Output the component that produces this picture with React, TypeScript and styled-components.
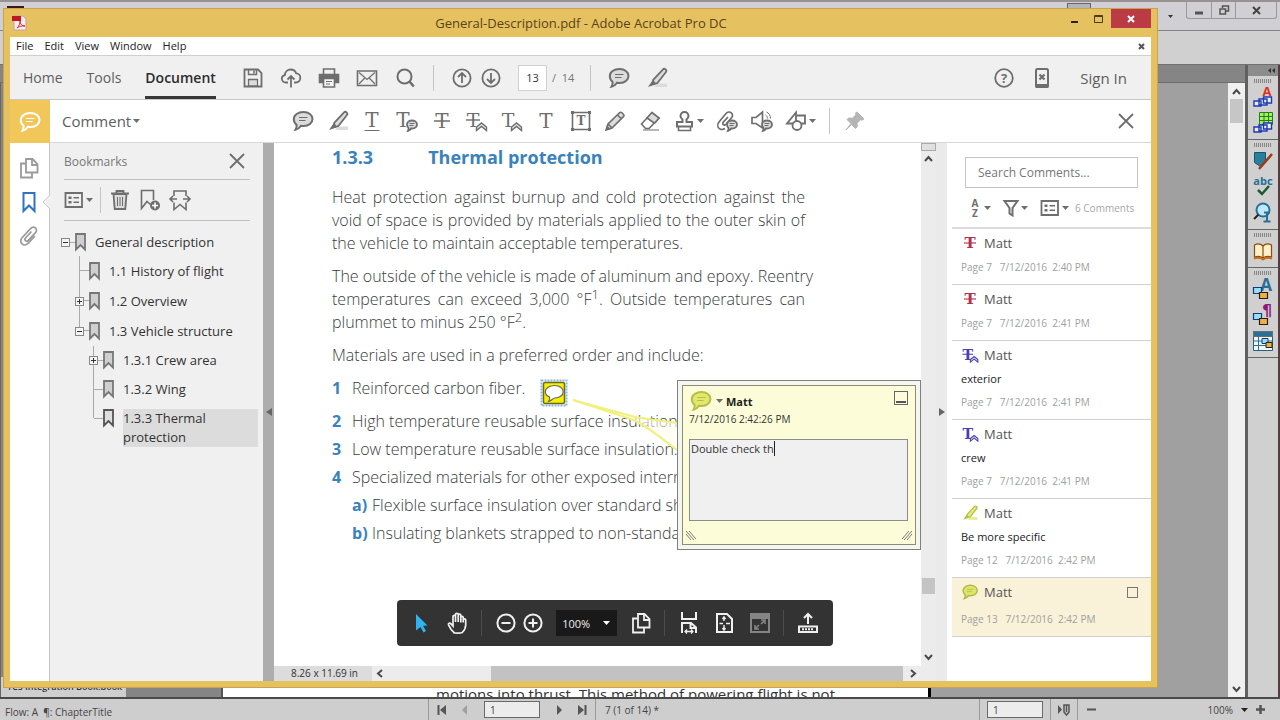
import React from "react";
import styled, { createGlobalStyle, css } from "styled-components";

const ink = "#6e6e6e";
const tint = "#dcdcdc";
const gold = "#e6c15f";

const Global = createGlobalStyle`
  *, *::before, *::after { box-sizing: border-box; }
  body { margin: 0; font-family: "Open Sans", "Noto Sans", sans-serif; font-size: 12px; color: #333; }
  button, input, select, textarea { font: inherit; color: inherit; margin: 0; }
  button { border: 0; padding: 0; background: none; cursor: pointer; }
  ul, ol { list-style: none; margin: 0; padding: 0; }
  h1, h2, h3, p { margin: 0; font-weight: inherit; font-size: inherit; }
`;

/* ---------- icons ---------- */

const Svg = styled.svg<{ $w?: number; $h?: number }>`
  display: block;
  flex: none;
  width: ${(p) => p.$w ?? 24}px;
  height: ${(p) => p.$h ?? 24}px;
  overflow: visible;
`;

type IconProps = { color?: string; fill?: string; bold?: boolean };
type DrawProps = { color?: string; children: React.ReactNode; w?: number; h?: number; sw?: number };

const Draw = ({ children, w = 24, h = 24, color = ink, sw = 2 }: DrawProps) => (
  <Svg $w={w} $h={h} viewBox={`0 0 ${w} ${h}`} fill="none" stroke={color} strokeWidth={sw} aria-hidden="true">
    {children}
  </Svg>
);

const Letter = ({ x = 12, y = 19, size = 20, color = ink, ch = "T", family = "DejaVu Serif", weight = 400 }) => (
  <text x={x} y={y} fontSize={size} fontFamily={family} fontWeight={weight} textAnchor="middle" fill={color} stroke="none">
    {ch}
  </text>
);

const Caret = ({ color = ink }: IconProps) => (
  <Svg $w={7} $h={4} viewBox="0 0 7 4" aria-hidden="true">
    <path d="M0 0h7L3.500 4z" fill={color} />
  </Svg>
);

const bubblePath = "M12.500 3c5.200 0 9 3 9 7s-3.800 7-8.800 7c-1 0-1.800-.1-2.700-.3-1.500 2.300-3.300 3.600-5.500 4 1-1.500 1.400-3.100 1.100-5C3.800 14.400 2.800 12.300 2.800 10c0-4 4.200-7 9.700-7z";

const Bubble = ({ color, fill = tint }: IconProps) => (
  <Draw color={color}>
    <path d={bubblePath} fill={fill} />
    <path d="M8 8.500h8.500M8 11.500h6.500" strokeWidth={1} />
  </Draw>
);
const MiniBubble = ({ x = 16, y = 16 }) => (
  <g transform={`translate(${x} ${y})`}>
    <path d="M0-4.500c3 0 5 1.800 5 4s-2 4-5 4l-1 0c-.7 1.400-1.700 2-3 2.300.5-.9.700-1.800.5-2.900C-4.500 2-5 .9-5-.5c0-2.200 2-4 5-4z" fill={tint} strokeWidth={1.8} />
    <path d="M-2.500-1.500h5M-2.500.5h4" strokeWidth={1} />
  </g>
);
const Marker = ({ color, fill = tint }: IconProps) => (
  <Draw color={color} sw={1.8}>
    <path d="M9 21h13v-3.500H12z" fill={fill} stroke="none" />
    <path d="M8.200 13.800L17.800 3.600c.8-.9 2-.9 2.800-.2.800.7.900 1.900.2 2.800l-8.600 11-4.300.8z" fill={fill} />
    <path d="M7.600 14.200L3 21l7.600-2.600-1-2.800z" fill={color ?? ink} stroke="none" />
  </Draw>
);
const Save = () => (
  <Draw sw={1.8}>
    <path d="M3.500 3.500h13.500l3.500 3.500v13.500h-17z" />
    <path d="M7.500 3.500v5h8v-5M13 4.500v3" strokeWidth={1.5} />
    <path d="M7.500 20v-6.500h9V20z" fill={tint} strokeWidth={1.3} />
  </Draw>
);
const Cloud = () => (
  <Draw sw={1.8}>
    <path d="M9 16.500H6.800c-2.200 0-4-1.600-4-3.700 0-1.900 1.300-3.400 3.100-3.700C6 6 8.400 3.500 11.600 3.500c2.600 0 4.700 1.500 5.600 3.900 2.400 0 4.100 2 4.100 4.400 0 2.600-1.800 4.700-4.400 4.700H15" />
    <path d="M12 21.500V10M8.500 13.500L12 10l3.500 3.500" />
  </Draw>
);
const Printer = () => (
  <Draw sw={1.6}>
    <path d="M6.500 8V3h11v5" />
    <path d="M2.500 8.500h19v8h-19z" fill={ink} />
    <path d="M6.500 12.500h11v8.500h-11z" fill="#f4f4f4" />
    <path d="M9 15.500h6M9 18h4" strokeWidth={1} />
  </Draw>
);
const Mail = () => (
  <Draw sw={1.6}>
    <path d="M2.500 5h19v14.500h-19z" />
    <path d="M4 6.500l8 7 8-7M4 18l5.800-6M20 18l-5.800-6" strokeWidth={1.2} />
  </Draw>
);
const Search = () => (
  <Draw>
    <circle cx="11.500" cy="10.500" r="7" />
    <path d="M16.500 15.500l4.300 5" strokeWidth={2.6} />
  </Draw>
);
const RoundArrow = ({ down = false }) => (
  <Draw sw={1.8}>
    <circle cx="12" cy="12" r="8.600" />
    <path d={down ? "M12 7v9.500M8 13l4 4 4-4" : "M12 17V7.500M8 11l4-4 4 4"} />
  </Draw>
);
const Help = () => (
  <Draw sw={1.8}>
    <circle cx="12" cy="12" r="8.800" />
    <Letter ch="?" size={13} y={17} family="Open Sans" weight={700} />
  </Draw>
);
const Phone = () => (
  <Draw sw={2}>
    <rect x="6" y="3" width="12" height="18" rx="1.500" />
    <path d="M6 18.500h12v3H6z" fill={ink} strokeWidth={1} />
    <path d="M9.500 8.500l5 5M14.500 8.500l-5 5" strokeWidth={2.2} />
  </Draw>
);
const chevrons = "M12.500 18l5-4 5 4v3.500l-5-4-5 4z";
const Underline = () => <Draw sw={1}><Letter y={18} /><path d="M4.500 21.500h15" /></Draw>;
const TextBubble = () => <Draw><Letter x={8} y={18} /><MiniBubble x={17} y={16} /></Draw>;
const Strike = ({ color = ink, bold }: IconProps) => (
  <Draw color={color} sw={1.5}><Letter color={color} weight={bold ? 700 : 400} /><path d="M4 12h16" /></Draw>
);
const Replace = ({ color = ink, bold }: IconProps) => (
  <Draw color={color} sw={1.4}>
    <Letter x={9} y={18} color={color} size={19} weight={bold ? 700 : 400} />
    <path d="M2 11h14" />
    <path d={chevrons} fill={tint} />
  </Draw>
);
const Insert = ({ color = ink, bold }: IconProps) => (
  <Draw color={color} sw={1.4}>
    <Letter x={9} y={18} color={color} size={19} weight={bold ? 700 : 400} />
    <path d={chevrons} fill={tint} />
  </Draw>
);
const PlainT = () => <Draw><Letter /></Draw>;
const BoxT = () => (
  <Draw sw={1.6}>
    <path d="M3.500 3.500h17v17h-17z" />
    <path d="M2 2h3v3H2zM19 2h3v3h-3zM2 19h3v3H2zM19 19h3v3h-3z" fill={ink} stroke="none" />
    <Letter y={16} size={12} weight={700} />
  </Draw>
);
const Pencil = () => (
  <Draw sw={1.6}>
    <path d="M3.500 20.500l1.500-5.500L16.500 3.700c.7-.7 1.700-.7 2.400 0l1.500 1.500c.7.700.7 1.700 0 2.400L9 19z" fill={tint} />
    <path d="M14.500 6l3.800 3.800M5 15l4 4" />
    <path d="M3.200 20.800l1-3 2 2z" fill={ink} />
  </Draw>
);
const Eraser = () => (
  <Draw sw={1.6}>
    <path d="M3.500 15L14 3.500l7 5.500L11 19.500H7.500z" fill="#fff" />
    <path d="M9 9l7.500 5.200L21 9l-7-5.500z" fill={tint} />
    <path d="M5 21h16" strokeWidth={1} />
  </Draw>
);
const Stamp = () => (
  <Draw w={20}>
    <path d="M7.500 13v-2.500C6 9.300 5.500 8.200 5.500 7A3.900 3.900 0 0 1 9.500 3a3.900 3.900 0 0 1 4 4c0 1.200-.6 2.300-2 3.500V13h5.500v4.500H2V13z" />
    <path d="M3.500 18v3.500h12V18" strokeWidth={1.6} />
  </Draw>
);
const ClipBubble = () => (
  <Draw sw={1.7}>
    <path d="M10 19.500c-2.500 1.800-6 1-7-1.500-.7-1.700-.2-3.500 1-5l7-8.500c1.500-1.700 3.800-2 5.300-.7 1.500 1.300 1.600 3.400.2 5l-5.500 6.500c-.8.9-2 1-2.700.3-.7-.6-.8-1.600 0-2.500L13 8" />
    <MiniBubble x={17} y={16} />
  </Draw>
);
const SoundBubble = () => (
  <Draw sw={1.7}>
    <path d="M2 8.500h4L12.500 3v16L6 14.500H2z" />
    <path d="M15.500 6c1.200.8 2 2 2 3.500M16.500 3c2.300 1 4 3.300 4 6.500" strokeWidth={1} />
    <MiniBubble x={17} y={16} />
  </Draw>
);
const Shapes = () => (
  <Draw w={22} sw={1.8}>
    <path d="M2 14.500L11 3.500v11z" />
    <path d="M12 6.500h8v8h-4" />
    <circle cx="12" cy="16.500" r="4.500" fill="#fff" />
  </Draw>
);
const Pin = () => (
  <Draw color="#b5b5b5" sw={1}>
    <path d="M14 3l7 7-2 1.200-1.500-.5-3.500 3.500.3 3.500-1.800 1.800-4-4L3 21l5-6.500-4-4L5.800 9l3.600.3 3.400-3.500L12.500 4z" fill="#b5b5b5" />
  </Draw>
);
const Cross = ({ color = ink, size = 16 }: { color?: string; size?: number }) => (
  <Draw w={size} h={size} color={color} sw={size > 12 ? 1.8 : 2}>
    <path d={`M1 1L${size - 1} ${size - 1}M${size - 1} 1L1 ${size - 1}`} />
  </Draw>
);
const Pages = ({ color = "#9a9a9a" }: IconProps) => (
  <Draw color={color} sw={1.8}>
    <path d="M9 3h6.500l5 5v8.500H9z" />
    <path d="M15 3.500V9h5.500" />
    <path d="M8.500 7.500H4v14h11V17" />
  </Draw>
);
const BookmarkMark = () => <Draw color="#2f74c0"><path d="M6.500 3h11v18L12 15.500 6.500 21z" /></Draw>;
const Clip = () => (
  <Draw color="#9a9a9a" sw={1.7}>
    <path d="M14.500 7.500L8.500 14c-.8.900-.7 2 0 2.700.8.700 2 .6 2.800-.3l7.200-7.700c1.400-1.500 1.300-3.500 0-4.700-1.400-1.200-3.300-1.100-4.700.4L5.300 13.500c-2 2.100-2 4.700-.3 6.300 1.700 1.600 4.400 1.400 6.300-.6l6.500-7" />
  </Draw>
);
const ListBox = () => (
  <Draw w={20} sw={1.8}>
    <path d="M1.500 5h16.500v14H1.500z" />
    <path d="M4.500 8.500h3v2.500h-3zM4.500 13h3v2.500h-3z" fill={ink} stroke="none" />
    <path d="M9.500 9.800h5.500M9.500 14.300h5.500" strokeWidth={1.5} />
  </Draw>
);
const Trash = () => (
  <Draw sw={1.8}>
    <path d="M3 5.500h18M8.500 5V3h7v2" />
    <path d="M5.500 6l1.200 15h10.600l1.200-15z" fill={tint} />
    <path d="M9.500 9v9M12 9v9M14.500 9v9" strokeWidth={1} />
  </Draw>
);
const BookmarkAdd = () => (
  <Draw sw={1.6}>
    <path d="M12.500 16.500L9 13.500l-5.500 7V2.500h12V12" />
    <circle cx="17" cy="17.500" r="5" fill={ink} stroke="none" />
    <path d="M17 14.500v6M14 17.500h6" stroke="#fff" />
  </Draw>
);
const BookmarkExpand = () => (
  <Draw sw={1.6}>
    <path d="M6 8V3h12v5M6 14.500v7l6-5 6 5v-7" />
    <path d="M9 11H2M5 8l-3 3 3 3M15 11h7M19 8l3 3-3 3" />
  </Draw>
);
const TreeMark = ({ dark = false }) => (
  <Svg $w={11} $h={18} viewBox="0 0 11 18" aria-hidden="true">
    <path d="M1 1h9v15.500L5.500 12 1 16.500z" fill={dark ? "#dedede" : "#cfcfcf"} stroke={dark ? "#555" : "#777"} strokeWidth="1.800" />
  </Svg>
);
const SortAZ = () => (
  <Draw w={14}>
    <Letter x={7} y={11} ch="A" size={10} family="Open Sans" weight={700} />
    <Letter x={7} y={21} ch="Z" size={10} family="Open Sans" weight={700} />
  </Draw>
);
const Funnel = () => <Draw w={16}><path d="M1.500 5h13l-5 7v7.500l-3-2V12z" /></Draw>;

/* ---------- backdrop application ---------- */

const Desktop = styled.div`
  position: relative;
  height: 100vh;
  display: flex;
  flex-direction: column;
  overflow: hidden;
  background: #d0d0d0;
`;
const BackTop = styled.div`
  height: 31px;
  flex: none;
  display: flex;
  justify-content: flex-end;
  align-items: flex-start;
  background: #cfcfd4;
  border-top: 2px solid #9a9292;
  border-bottom: 1px solid #858585;
`;
const BackTools = styled.div`
  height: 34px;
  flex: none;
  border-bottom: 1px solid #707070;
`;
const LogoSliver = styled.span`
  width: 17px;
  height: 12px;
  margin: 4px auto 0 7px;
  background: #3a1a18;
`;
const TopCombo = styled.span`
  width: 24px;
  height: 12px;
  margin: 1px 77px 0 0;
  border: 1px solid #666;
  background: #b4b4bc;
`;
const TopCaret = styled.span`
  margin: 13px 13px 0 0;
`;
const BackControls = styled.div`
  display: flex;
  height: 17px;
  margin-right: 3px;
  border: 1px solid #999;
  border-top: 0;
  border-radius: 0 0 3px 3px;
`;
const BackControl = styled.button<{ $wide?: boolean }>`
  display: grid;
  place-items: center;
  width: ${(p) => (p.$wide ? 41 : 24)}px;
  & + & { border-left: 1px solid #999; }
`;
const BackMain = styled.div`
  flex: 1;
  min-height: 0;
  display: flex;
`;
const BackDocColumn = styled.div`
  flex: 1;
  display: flex;
  flex-direction: column;
`;
const BackTabs = styled.div`
  height: 18px;
  background: #858585;
  border-bottom: 1px solid #6c6c6c;
`;
const BackCanvas = styled.div`
  flex: 1;
  min-height: 0;
  display: flex;
  background: #a0a0a0;
`;
const BookPane = styled.div`
  width: 223px;
  display: flex;
  align-items: flex-end;
  background: #858585;
  border-right: 2px solid #555;
  border-left: 1px solid #666;
`;
const BookTab = styled.span`
  width: 125px;
  padding-left: 6px;
  line-height: 20px;
  white-space: nowrap;
  font-size: 9px;
  font-weight: 600;
  color: #333;
  background: #cfcfcf;
`;
const BackPage = styled.div`
  flex: 0 1 708px;
  display: flex;
  align-items: flex-end;
  overflow: hidden;
  padding-left: 213px;
  background: #fff;
  border-right: 3px solid #000;
`;
const BackPageLine = styled.p`
  flex: none;
  height: 13px;
  line-height: 20px;
  font-size: 15px;
  color: #333;
`;
const BackScroll = styled.div`
  width: 17px;
  margin-left: auto;
  display: flex;
  flex-direction: column;
  align-items: center;
  justify-content: space-between;
  padding: 5px 0 4px;
  background: #f0f0f0;
`;
const BackThumb = styled.span`
  width: 13px;
  height: 24px;
  margin: 2px 0 auto;
  background: #c6c6c6;
`;
const Palette = styled.div`
  width: 35px;
  display: flex;
  flex-direction: column;
  border-left: 3px solid #606060;
  border-right: 2px solid #5a3a40;
`;
const PaletteHead = styled.div`
  height: 11px;
  display: flex;
  justify-content: flex-end;
  align-items: center;
  padding-right: 3px;
  background: #8c8c8c;
`;
const PaletteGroup = styled.div`
  display: flex;
  flex-direction: column;
  align-items: center;
  gap: 2px;
  padding: 3px 0 4px;
  border-bottom: 1px solid #666;
`;
const Grip = styled.span`
  width: 18px;
  height: 4px;
  background: repeating-linear-gradient(90deg, #888 0 1px, #ccc 1px 2px);
`;
const BackStatus = styled.footer`
  height: 23px;
  flex: none;
  display: flex;
  align-items: center;
  background: #cecece;
  border-top: 2px solid #4a4a4a;
  font-size: 10px;
  color: #444;
`;
const StatusText = styled.span`
  padding: 5px 0 0 5px;
  flex: 0 0 428px;
`;
const StatusGroup = styled.div<{ $w: number }>`
  height: 21px;
  width: ${(p) => p.$w}px;
  display: flex;
  align-items: center;
  justify-content: space-around;
  border-left: 1px solid #9a9a9a;
`;
const StatusInput = styled.input`
  width: 56px;
  height: 17px;
  padding: 0 5px;
  border: 1px solid #6a6a6a;
  border-radius: 0;
  background: #ececec;
`;
const StatusCount = styled.span`
  flex: 1;
  height: 21px;
  padding: 4px 0 0 9px;
  border-left: 1px solid #9a9a9a;
`;
const StatusZoom = styled.div`
  flex: 0 0 203px;
  height: 21px;
  display: flex;
  align-items: center;
  gap: 8px;
  padding: 0 15px 0 9px;
  border-left: 1px solid #9a9a9a;
`;
const ZoomLevel = styled.span`
  margin-left: auto;
`;

const Chevron = ({ dir }: { dir: "up" | "down" | "left" | "right" }) => {
  const d = { up: "M1 6l3.500-4L8 6", down: "M1 3l3.500 4L8 3", left: "M6 1L2 4.500 6 8", right: "M3 1l4 3.500L3 8" }[dir];
  return <Draw w={9} h={9} color="#4a4a4a"><path d={d} /></Draw>;
};

/* small blue and amber squares shared by the catalog icons */
const Tiles = () => (
  <g strokeWidth="1.200">
    <path d="M2.500 10.500h8v6h-8z" fill="#9adcf0" stroke="#123a80" />
    <path d="M8.500 15.500h8v6h-8z" fill="#f0b040" stroke="#222" />
  </g>
);
const Stack = () => (
  <g fill="#e8f0ff" stroke="#2038b0" strokeWidth="1.400">
    <path d="M12.500 12h8v6h-8zM8 14h8v6H8zM3 16h7v5H3z" />
  </g>
);
const paletteGroups: React.ReactNode[][] = [
  [
    <Draw key="char"><Letter x={16} y={11} ch="A" size={13} color="#e03020" family="Open Sans" weight={700} /><Stack /></Draw>,
    <Draw key="grid" sw={1}><path d="M8.500 1.500h13v12h-13z" fill="#a8f060" stroke="#208020" /><path d="M13 1.500v12M17.500 1.500v12M8.500 5.500h13M8.500 9.500h13" stroke="#208020" /><Stack /></Draw>,
  ],
  [
    <Draw key="tag" sw={1}><path d="M3.500 3.500h11v8l-5 6-6-4z" fill="#2a7f9c" stroke="#1b5468" /><path d="M21 5L8 20" stroke="#a03818" strokeWidth={2.5} /></Draw>,
    <Draw key="spell"><Letter y={10} ch="abc" size={11} color="#2a6f96" family="Open Sans" weight={700} /><path d="M7 15l4 4 7-8" stroke="#1c5a30" strokeWidth={2.5} /></Draw>,
    <Draw key="find"><circle cx="12" cy="9" r="6.500" fill="#bfe8fa" stroke="#2a6f96" /><path d="M7.500 13.500L3 18" stroke="#222" /><path d="M16 11v9M12.500 20.500h7M13 11.500h6" stroke="#2a6f96" /></Draw>,
  ],
  [
    <Draw key="book" sw={1.2}><path d="M12 7c-2.500-2.500-6-2.500-8.500-1v12c3-1 6-1 8.500 1 2.500-2 5-2 8.500-1V6c-2.500-1.500-6-1.500-8.500 1z" fill="#fff0c8" stroke="#8a4a10" /><path d="M12 7v12" stroke="#8a4a10" /><path d="M3 19.500c3-1 6-1 9 1 3-2 6-2 9-1" stroke="#c86a18" strokeWidth={2} /></Draw>,
  ],
  [
    <Draw key="cf"><Letter x={15} y={14} ch="A" size={17} color="#2a6f96" family="Open Sans" weight={700} /><Tiles /></Draw>,
    <Draw key="pf"><Letter x={16} y={13} ch="¶" size={16} color="#8a1a7a" family="DejaVu Sans" weight={700} /><Tiles /></Draw>,
    <Draw key="table" sw={1}><path d="M2.500 2.500h19v19h-19z" fill="#eef6fa" stroke="#2a5f7a" /><path d="M2.500 2.500h19v5h-19z" fill="#2a6f96" /><path d="M2.500 12h19M2.500 16.500h19M7.500 7v14" stroke="#2a6f96" /><path d="M11 9.500h6v5h-6z" fill="#9adcf0" stroke="#123a80" /><path d="M15 13.500h6v5h-6z" fill="#f0b040" stroke="#222" /></Draw>,
  ],
];

const Backdrop = () => (
  <>
    <BackTop>
      <LogoSliver />
      <TopCombo />
      <TopCaret><Svg $w={5} $h={3} viewBox="0 0 7 4"><path d="M0 0h7L3.500 4z" fill="#333" /></Svg></TopCaret>
      <BackControls>
        <BackControl aria-label="Minimize application"><Draw w={10} h={10} color="#555"><path d="M1 8h8" strokeWidth={3} /></Draw></BackControl>
        <BackControl aria-label="Restore application"><Draw w={10} h={10} color="#555" sw={1.5}><path d="M3.500 3V1h6v5H7M1 4h5.500v5H1z" /></Draw></BackControl>
        <BackControl $wide aria-label="Close application"><Cross size={9} color="#444" /></BackControl>
      </BackControls>
    </BackTop>
    <BackTools />
    <BackMain>
      <BackDocColumn>
        <BackTabs />
        <BackCanvas>
          <BookPane><BookTab>TCS Integration Book.book</BookTab></BookPane>
          <BackPage><BackPageLine>motions into thrust. This method of powering flight is not</BackPageLine></BackPage>
          <BackScroll><Chevron dir="up" /><BackThumb /><Chevron dir="down" /></BackScroll>
        </BackCanvas>
      </BackDocColumn>
      <Palette>
        <PaletteHead><Svg $w={7} $h={5} viewBox="0 0 7 5"><path d="M3 0v5L0 2.500zM7 0v5L4 2.500z" fill="#333" /></Svg></PaletteHead>
        {paletteGroups.map((icons, i) => (
          <PaletteGroup key={i}><Grip />{icons}</PaletteGroup>
        ))}
      </Palette>
    </BackMain>
    <BackStatus>
      <StatusText>Flow: A&nbsp; ¶: ChapterTitle</StatusText>
      <StatusGroup $w={167}>
        <Draw w={10} h={10} color="#555"><path d="M1.500 0v10" /><path d="M9 0v10L3 5z" fill="#555" stroke="none" /></Draw>
        <Draw w={6} h={10}><path d="M5 0v10L0 5z" fill="#a0a0a0" stroke="none" /></Draw>
        <StatusInput aria-label="Page" defaultValue="1" />
        <Draw w={6} h={10}><path d="M1 0v10l5-5z" fill="#555" stroke="none" /></Draw>
        <Draw w={10} h={10} color="#555"><path d="M8.500 0v10" /><path d="M1 0v10l6-5z" fill="#555" stroke="none" /></Draw>
      </StatusGroup>
      <StatusCount>7 (1 of 14) *</StatusCount>
      <StatusGroup $w={71}><StatusInput aria-label="Line" defaultValue="1" /></StatusGroup>
      <StatusGroup $w={27}>
        <Draw w={12} h={12} color="#555"><path d="M0 1v9l4-4.500z" fill="#555" stroke="none" /><path d="M6 1h5v7l-2.500 3L6 8zM8.500 1v7" strokeWidth={1.5} /></Draw>
      </StatusGroup>
      <StatusZoom>
        <Draw w={9} h={9} color="#555"><path d="M0 4.500h9" /></Draw>
        <ZoomLevel>100%</ZoomLevel>
        <Caret color="#222" />
        <Draw w={9} h={9} color="#555" sw={2.5}><path d="M0 4.500h9M4.500 0v9" /></Draw>
      </StatusZoom>
    </BackStatus>
  </>
);

/* ---------- Acrobat window frame ---------- */

const Window = styled.div`
  position: absolute;
  inset: 8px 122px 32px 3px;
  display: flex;
  flex-direction: column;
  padding: 0 6px 6px;
  background: ${gold};
  border: 1px solid #c9a44a;
`;
const TitleBar = styled.header`
  height: 28px;
  flex: none;
  display: grid;
  grid-template-columns: 1fr auto 1fr;
  align-items: center;
  padding-left: 1px;
`;
const WindowTitle = styled.h1`
  font-size: 13px;
  line-height: 28px;
  color: #57451c;
`;
const WindowButtons = styled.div`
  display: flex;
  justify-content: flex-end;
  align-self: start;
`;
const WindowButton = styled.button<{ $close?: boolean }>`
  display: grid;
  place-items: center;
  height: 19px;
  width: ${(p) => (p.$close ? 40 : 24)}px;
  ${(p) => p.$close && css`background: #bb3b45;`}
`;
const Client = styled.div`
  flex: 1;
  min-height: 0;
  display: flex;
  flex-direction: column;
  background: #fff;
`;
const MenuBar = styled.nav`
  height: 19px;
  flex: none;
  display: flex;
  align-items: center;
  gap: 11px;
  padding: 0 6px 0 6px;
  border-bottom: 1px solid #cfcfcf;
`;
const MenuItem = styled.button`
  font-size: 11px;
  line-height: 18px;
  color: #222;
`;
const MenuClose = styled.button`
  margin-left: auto;
`;

/* ---------- toolbars ---------- */

const MainBar = styled.div`
  height: 44px;
  flex: none;
  display: flex;
  align-items: center;
  padding: 0 24px 0 13px;
  background: #f0f0f0;
  border-bottom: 1px solid #c8c8c8;
`;
const Tabs = styled.nav`
  display: flex;
  gap: 24px;
  height: 43px;
  width: 218px;
`;
const Tab = styled.button<{ $active?: boolean }>`
  padding-top: 2px;
  font-size: 14px;
  color: #5e5e5e;
  border-bottom: 3px solid transparent;
  ${(p) => p.$active && css`color: #2c2c2c; font-weight: 600; border-color: #383838;`}
`;
const IconRow = styled.div<{ $gap?: number; $w?: number; $before?: number }>`
  display: flex;
  align-items: center;
  justify-content: space-between;
  gap: ${(p) => p.$gap ?? 0}px;
  margin-left: ${(p) => p.$before ?? 0}px;
  ${(p) => p.$w && css`width: ${p.$w}px;`}
`;
const IconButton = styled.button`
  display: flex;
  align-items: center;
  gap: 2px;
`;
const Divider = styled.span<{ $side?: number }>`
  width: 1px;
  height: 26px;
  margin: 0 ${(p) => p.$side ?? 16}px;
  background: #c4c4c4;
`;
const PageInput = styled.input`
  width: 29px;
  height: 26px;
  margin: 0 5px 0 15px;
  padding: 0;
  border: 1px solid #d0d0d0;
  background: #fff;
  font-size: 11px;
  text-align: center;
`;
const PageTotal = styled.span`
  font-size: 11px;
  color: #777;
`;
const MainRight = styled.div`
  margin-left: auto;
  display: flex;
  align-items: center;
  gap: 14px;
`;
const SignIn = styled.button`
  margin-left: 12px;
  font-size: 15px;
  color: #5e5e5e;
`;
const CommentBar = styled.div`
  height: 43px;
  flex: none;
  display: flex;
  align-items: center;
  padding-right: 17px;
  border-bottom: 1px solid #d8d8d8;
`;
const CommentBadge = styled.div`
  width: 40px;
  height: 43px;
  margin-bottom: -1px;
  display: grid;
  place-items: center;
  background: #f2c75a;
`;
const CommentMenu = styled.button`
  display: flex;
  align-items: center;
  gap: 2px;
  width: 241px;
  padding-left: 12px;
  font-size: 15px;
  color: #5e5e5e;
`;
const BarClose = styled.button`
  margin-left: auto;
`;

const markupTools: [string, React.ReactNode][] = [
  ["Add sticky note", <Bubble key="i" />],
  ["Highlight text", <Marker key="i" />],
  ["Underline text", <Underline key="i" />],
  ["Add note to text", <TextBubble key="i" />],
  ["Strikethrough text", <Strike key="i" />],
  ["Replace text", <Replace key="i" />],
  ["Insert text", <Insert key="i" />],
  ["Add text comment", <PlainT key="i" />],
  ["Add text box", <BoxT key="i" />],
  ["Draw free form", <Pencil key="i" />],
  ["Erase drawing", <Eraser key="i" />],
];

const Toolbars = () => (
  <>
    <MainBar>
      <Tabs>
        <Tab>Home</Tab>
        <Tab>Tools</Tab>
        <Tab $active>Document</Tab>
      </Tabs>
      <IconRow $gap={14}>
        <IconButton aria-label="Save"><Save /></IconButton>
        <IconButton aria-label="Upload"><Cloud /></IconButton>
        <IconButton aria-label="Print"><Printer /></IconButton>
        <IconButton aria-label="Email"><Mail /></IconButton>
        <IconButton aria-label="Search"><Search /></IconButton>
      </IconRow>
      <Divider />
      <IconRow $gap={5}>
        <IconButton aria-label="Previous page"><RoundArrow /></IconButton>
        <IconButton aria-label="Next page"><RoundArrow down /></IconButton>
      </IconRow>
      <PageInput aria-label="Page number" defaultValue="13" />
      <PageTotal>/&nbsp; 14</PageTotal>
      <Divider />
      <IconRow $gap={14}>
        <IconButton aria-label="Comment"><Bubble /></IconButton>
        <IconButton aria-label="Highlight"><Marker /></IconButton>
      </IconRow>
      <MainRight>
        <IconButton aria-label="Help"><Help /></IconButton>
        <IconButton aria-label="Mobile link"><Phone /></IconButton>
        <SignIn>Sign In</SignIn>
      </MainRight>
    </MainBar>
    <CommentBar>
      <CommentBadge><Bubble color="#fff" fill="none" /></CommentBadge>
      <CommentMenu>Comment <Caret /></CommentMenu>
      <IconRow $w={371}>
        {markupTools.map(([label, icon]) => (
          <IconButton key={label} aria-label={label}>{icon}</IconButton>
        ))}
      </IconRow>
      <IconRow $gap={11} $before={13}>
        <IconButton aria-label="Stamp"><Stamp /><Caret /></IconButton>
        <IconButton aria-label="Attach file"><ClipBubble /></IconButton>
        <IconButton aria-label="Record audio"><SoundBubble /></IconButton>
        <IconButton aria-label="Drawing tools"><Shapes /><Caret /></IconButton>
      </IconRow>
      <Divider $side={13} />
      <IconButton aria-label="Keep tool selected"><Pin /></IconButton>
      <BarClose aria-label="Close comment toolbar"><Cross /></BarClose>
    </CommentBar>
  </>
);

/* ---------- bookmarks ---------- */

const Workspace = styled.main`
  flex: 1;
  min-height: 0;
  display: flex;
`;
const Rail = styled.nav`
  position: relative;
  width: 40px;
  flex: none;
  display: flex;
  flex-direction: column;
  align-items: center;
  gap: 10px;
  padding: 13px 1px 0 0;
  border-right: 1px solid #c8c8c8;
`;
const RailArrow = styled.span`
  position: absolute;
  right: -1px;
  top: 52px;
`;
const Panel = styled.aside`
  width: 213px;
  flex: none;
  background: #f0f0f0;
`;
const PanelHead = styled.div`
  margin: 0 13px 0 14px;
  height: 37px;
  display: flex;
  align-items: center;
  justify-content: space-between;
  padding-right: 5px;
  border-bottom: 1px solid #c0c0c0;
`;
const PanelTitle = styled.h2`
  font-size: 12px;
  color: #777;
`;
const PanelTools = styled.div`
  margin: 0 13px 0 14px;
  height: 41px;
  display: flex;
  align-items: center;
  gap: 4px;
  border-bottom: 1px solid #c0c0c0;
`;
const Tree = styled.ul`
  padding-top: 7px;
`;
const TreeRow = styled.li<{ $depth: number; $last?: boolean }>`
  position: relative;
  display: flex;
  align-items: flex-start;
  padding: ${(p) => (p.$depth === 0 ? "5px 5px 4px" : p.$depth === 1 ? "6px 5px 5px" : "5px")};
  padding-left: ${(p) => 11 + p.$depth * 14}px;
  &::after {
    content: "";
    position: absolute;
    top: 14px;
    left: ${(p) => 16 + p.$depth * 14}px;
    width: 10px;
    height: 1px;
    background: #aaa;
  }
  ${(p) => p.$depth > 0 && css`
    &::before {
      content: "";
      position: absolute;
      top: 0;
      left: ${15 + p.$depth * 14}px;
      width: 1px;
      ${p.$last ? "height: 14px;" : "bottom: 0;"}
      background: #aaa;
    }
  `}
`;
const Toggle = styled.button`
  position: relative;
  z-index: 1;
  width: 9px;
  height: 9px;
  margin-top: 5px;
  background: #f4f4f4;
  border: 1px solid #888;
`;
const NoToggle = styled.span`
  width: 9px;
`;
const TreeIcon = styled.span`
  position: relative;
  z-index: 1;
  margin: 0 9px 0 5px;
`;
const TreeLabel = styled.a<{ $selected?: boolean }>`
  flex: 1;
  font-size: 13px;
  line-height: 19px;
  color: #333;
  text-decoration: none;
  ${(p) => p.$selected && css`background: #dcdcdc;`}
`;
const Splitter = styled.button<{ $tone: string }>`
  width: 11px;
  flex: none;
  display: grid;
  place-items: center;
  background: ${(p) => p.$tone};
`;

const bookmarks = [
  { label: "General description", depth: 0, state: "open" },
  { label: "1.1 History of flight", depth: 1 },
  { label: "1.2 Overview", depth: 1, state: "closed" },
  { label: "1.3 Vehicle structure", depth: 1, state: "open", last: true },
  { label: "1.3.1 Crew area", depth: 2, state: "closed" },
  { label: "1.3.2 Wing", depth: 2 },
  { label: "1.3.3 Thermal protection", depth: 2, last: true, selected: true },
];

const Bookmarks = () => (
  <Panel>
    <PanelHead>
      <PanelTitle>Bookmarks</PanelTitle>
      <button aria-label="Close bookmarks"><Cross /></button>
    </PanelHead>
    <PanelTools>
      <IconButton aria-label="Bookmark options"><ListBox /><Caret /></IconButton>
      <Divider $side={3} />
      <IconRow $gap={6}>
        <IconButton aria-label="Delete bookmark"><Trash /></IconButton>
        <IconButton aria-label="New bookmark"><BookmarkAdd /></IconButton>
        <IconButton aria-label="Expand bookmark"><BookmarkExpand /></IconButton>
      </IconRow>
    </PanelTools>
    <Tree>
      {bookmarks.map((b) => (
        <TreeRow key={b.label} $depth={b.depth} $last={b.last}>
          {b.state ? (
            <Toggle aria-label={`Toggle ${b.label}`}>
              <Svg $w={7} $h={7} viewBox="0 0 7 7"><path d={b.state === "open" ? "M1 3.500h5" : "M1 3.500h5M3.500 1v5"} stroke="#333" /></Svg>
            </Toggle>
          ) : <NoToggle />}
          <TreeIcon><TreeMark dark={b.selected} /></TreeIcon>
          <TreeLabel href="#" $selected={b.selected}>{b.label}</TreeLabel>
        </TreeRow>
      ))}
    </Tree>
  </Panel>
);

/* ---------- document view ---------- */

const DocView = styled.section`
  position: relative;
  flex: 1;
  min-width: 0;
  display: flex;
  flex-direction: column;
`;
const DocRow = styled.div`
  flex: 1;
  min-height: 0;
  display: flex;
`;
const Page = styled.article`
  flex: 1;
  padding: 1px 116px 0 58px;
  overflow: hidden;
  font-size: 16px;
  font-weight: 300;
  line-height: 23px;
  color: #3c3c3c;
`;
const Heading = styled.h2`
  display: flex;
  gap: 55px;
  margin-bottom: 16px;
  font-size: 18px;
  font-weight: 700;
  line-height: 26px;
  color: #3a82bb;
`;
const Paragraph = styled.p`
  margin-bottom: 10px;
`;
const Line = styled.span<{ $last?: boolean }>`
  display: block;
  white-space: nowrap;
  text-align: justify;
  text-align-last: ${(p) => (p.$last ? "left" : "justify")};
`;
const Sup = styled.sup`
  font-size: 13px;
  line-height: 0;
`;
const Steps = styled.ol<{ $nested?: boolean }>`
  margin-left: ${(p) => (p.$nested ? 20 : 0)}px;
`;
const Step = styled.li<{ $gap?: number }>`
  display: flex;
  margin-bottom: ${(p) => p.$gap ?? 5}px;
  white-space: nowrap;
`;
const StepMark = styled.span`
  width: 20px;
  flex: none;
  font-weight: 700;
  color: #3a82bb;
`;
const VScroll = styled.div`
  width: 15px;
  display: flex;
  flex-direction: column;
  align-items: center;
  padding-bottom: 5px;
  background: #ececec;
`;
const SplitHandle = styled.span`
  width: 15px;
  height: 8px;
  margin-bottom: 4px;
  border: 1px solid #aaa;
  background: #e0e0e0;
`;
const VThumb = styled.span`
  width: 13px;
  height: 16px;
  margin: auto 0 58px;
  background: #c4c4c4;
`;
const DocFoot = styled.div`
  height: 15px;
  flex: none;
  display: flex;
  align-items: center;
  background: #ececec;
  padding-right: 19px;
`;
const PageSize = styled.span`
  width: 98px;
  line-height: 15px;
  padding-left: 17px;
  font-size: 10px;
  background: #dcdcdc;
  margin-right: 4px;
`;
const HThumb = styled.span`
  height: 15px;
  flex: 1;
  margin: 0 5px 0 106px;
  background: #c2c2c2;
`;
const NoteMarker = styled.button`
  position: absolute;
  left: 266px;
  top: 236px;
`;
const Leader = styled.span`
  position: absolute;
  left: 299px;
  top: 257px;
`;
const Popup = styled.div`
  position: absolute;
  left: 403px;
  top: 237px;
  width: 244px;
  height: 170px;
  padding: 4px;
  background: #f6f6f0;
  border: 1px solid #808080;
`;
const PopupBody = styled.div`
  height: 100%;
  display: flex;
  flex-direction: column;
  padding: 5px 7px 2px 6px;
  background: #fcfdd8;
  border: 1px solid #8c8c7c;
`;
const PopupHead = styled.div`
  display: flex;
  align-items: center;
  gap: 3px;
  height: 20px;
`;
const PopupAuthor = styled.strong`
  font-size: 11px;
  font-weight: 700;
  color: #222;
`;
const PopupMin = styled.button`
  width: 14px;
  height: 14px;
  margin: 0 0 6px auto;
  padding: 8px 1px 0;
  border: 1px solid #666;
`;
const MinBar = styled.span`
  display: block;
  height: 2px;
  background: #555;
`;
const PopupDate = styled.span`
  font-size: 10px;
  line-height: 16px;
  color: #333;
`;
const NoteField = styled.div`
  position: relative;
  margin: 12px 0 9px;
`;
const NoteText = styled.textarea`
  display: block;
  width: 100%;
  height: 82px;
  padding: 0 1px;
  resize: none;
  border: 1px solid #8c8c8c;
  border-radius: 0;
  outline: 0;
  background: #f0f0f0;
  font-size: 11px;
  line-height: 18px;
  color: #333;
`;
const TextCursor = styled.span`
  position: absolute;
  left: 85px;
  top: 2px;
  width: 1px;
  height: 15px;
  background: #222;
`;
const Resizers = styled.div`
  display: flex;
  justify-content: space-between;
  margin: 0 -4px 0 -3px;
`;
const FloatBar = styled.div`
  position: absolute;
  left: 123px;
  bottom: 35px;
  width: 436px;
  height: 46px;
  display: flex;
  align-items: center;
  justify-content: space-between;
  padding: 0 13px;
  background: #333;
  border-radius: 4px;
`;
const FloatDivider = styled.span`
  width: 1px;
  height: 26px;
  background: #4c4c4c;
`;
const ZoomBox = styled.label`
  position: relative;
  display: flex;
  align-items: center;
  width: 61px;
  height: 26px;
  background: #191919;
`;
const ZoomSelect = styled.select`
  appearance: none;
  width: 100%;
  height: 26px;
  padding: 0 0 0 6px;
  border: 0;
  background: transparent;
  color: #eee;
  font-size: 11px;
`;
const ZoomCaret = styled.span`
  position: absolute;
  right: 7px;
`;

const light = "#f0f0f0";

const DocumentView = () => (
  <DocView>
    <DocRow>
      <Page>
        <Heading><span>1.3.3</span><span>Thermal protection</span></Heading>
        <Paragraph>
          <Line>Heat protection against burnup and cold protection against the</Line>
          <Line>void of space is provided by materials applied to the outer skin of</Line>
          <Line $last>the vehicle to maintain acceptable temperatures.</Line>
        </Paragraph>
        <Paragraph>
          <Line>The outside of the vehicle is made of aluminum and epoxy. Reentry</Line>
          <Line>temperatures can exceed 3,000 °F<Sup>1</Sup>. Outside temperatures can</Line>
          <Line $last>plummet to minus 250 °F<Sup>2</Sup>.</Line>
        </Paragraph>
        <Paragraph><Line $last>Materials are used in a preferred order and include:</Line></Paragraph>
        <Steps>
          <Step $gap={10}><StepMark>1</StepMark>Reinforced carbon fiber.</Step>
          <Step><StepMark>2</StepMark>High temperature reusable surface insulation.</Step>
          <Step><StepMark>3</StepMark>Low temperature reusable surface insulation.</Step>
          <Step><StepMark>4</StepMark>Specialized materials for other exposed internal</Step>
        </Steps>
        <Steps $nested>
          <Step><StepMark>a)</StepMark>Flexible surface insulation over standard shapes</Step>
          <Step><StepMark>b)</StepMark>Insulating blankets strapped to non-standard</Step>
        </Steps>
      </Page>
      <VScroll>
        <SplitHandle />
        <Chevron dir="up" />
        <VThumb />
        <Chevron dir="down" />
      </VScroll>
    </DocRow>
    <DocFoot>
      <PageSize>8.26 x 11.69 in</PageSize>
      <Chevron dir="left" />
      <HThumb />
      <Chevron dir="right" />
    </DocFoot>

    <Leader>
      <Svg $w={103} $h={54} viewBox="0 0 103 54">
        <path d="M0 0L62 18 104 23V50C92 40 76 27 60 20z" fill="#fffff0" fillOpacity="0.600" />
        <path d="M0 0L62 17 104 23M0 0L58 19C74 25 90 40 104 50" fill="none" stroke="#f0f07c" strokeWidth="2" />
      </Svg>
    </Leader>
    <NoteMarker aria-label="Sticky note">
      <Draw w={28} h={28} sw={1.5}>
        <rect x="1.500" y="1.500" width="25" height="25" stroke="#8ab4dc" strokeWidth="2" strokeDasharray="2 1" />
        <rect x="3.500" y="3.500" width="21" height="21" rx="1.500" fill="#f4f000" stroke="#6a6a20" />
        <path d="M14.500 6.500c5 0 8.700 2.600 8.700 6.300s-3.900 6.200-8.500 6.200c-2 .1-3.200 2.800-6.200 3.500 1.200-1.500 1.500-3 1-4.500-2.500-1-4.200-3-4.200-5.200 0-3.700 4.200-6.300 9.200-6.300z" fill="#fff" stroke="#666" strokeWidth="1.200" />
      </Draw>
    </NoteMarker>
    <Popup role="dialog" aria-label="Note by Matt">
      <PopupBody>
        <PopupHead>
          <Bubble color="#b4bd4e" fill="#e2e86a" />
          <Caret />
          <PopupAuthor>Matt</PopupAuthor>
          <PopupMin aria-label="Minimize note"><MinBar /></PopupMin>
        </PopupHead>
        <PopupDate>7/12/2016 2:42:26 PM</PopupDate>
        <NoteField>
          <NoteText aria-label="Note text" defaultValue="Double check th" spellCheck={false} />
          <TextCursor />
        </NoteField>
        <Resizers>
          <Draw w={10} h={10} color="#777" sw={1}><path d="M0 1l8 9M3 1l7 8M0 4l5 6" /></Draw>
          <Draw w={10} h={10} color="#777" sw={1}><path d="M10 1l-8 9M7 1L0 9M10 4l-5 6" /></Draw>
        </Resizers>
      </PopupBody>
    </Popup>
    <FloatBar>
      <IconButton aria-label="Select"><Draw><path d="M6 3l11.500 11.500-4.500.3 3 5.200-2.500 1.500-3-5.500L6 19.500z" fill="#2fb4ee" stroke="none" /></Draw></IconButton>
      <IconButton aria-label="Pan">
        <Draw color={light} sw={1.7}><path d="M8 21.500C5.500 19.500 3.500 16 2.500 13.800c-.5-1.300 1.300-2.300 2.500-1L7 15V5.500c0-1.600 2.500-1.600 2.500 0V11 3.500c0-1.700 2.700-1.700 2.700 0V11 4.300c0-1.600 2.600-1.600 2.600 0V11.500 6.500c0-1.500 2.400-1.500 2.400 0V11.500 9c.2-1.500 2.500-1.500 2.500 0V14c0 3.500-1.500 5.500-3.500 7.500-2 .8-7 .8-9.200 0z" /></Draw>
      </IconButton>
      <FloatDivider />
      <IconRow $gap={3}>
        <IconButton aria-label="Zoom out"><Draw color={light}><circle cx="12" cy="12" r="8.600" /><path d="M7.500 12h9" /></Draw></IconButton>
        <IconButton aria-label="Zoom in"><Draw color={light}><circle cx="12" cy="12" r="8.600" /><path d="M7.500 12h9M12 7.500v9" /></Draw></IconButton>
      </IconRow>
      <ZoomBox>
        <ZoomSelect aria-label="Zoom level" defaultValue="100"><option value="100">100%</option></ZoomSelect>
        <ZoomCaret><Caret color="#fff" /></ZoomCaret>
      </ZoomBox>
      <IconButton aria-label="Page display"><Pages color={light} /></IconButton>
      <FloatDivider />
      <IconButton aria-label="Fit width"><Draw color={light}><path d="M5 1v7h14V1M5 22V12h9l5 4.500V22M13.500 12v5H19" /><path d="M8 20.500h8M10 18.500l-2 2 2 2M14 18.500l2 2-2 2" strokeWidth={1.3} /></Draw></IconButton>
      <IconButton aria-label="Fit page"><Draw color={light}><path d="M5 3h10l5 5v13H5z" /><path d="M12 6v4M12 14v5M7.500 12.500h3.500M14 12.500h4M10.500 8L12 6l1.500 2M10.500 17l1.500 2 1.500-2" strokeWidth={1.4} /></Draw></IconButton>
      <IconButton aria-label="Full screen"><Draw color="#858585"><path d="M3 3h18v18H3z" /><path d="M3 3h18v4H3z" fill="#858585" /><path d="M13 13l4-4M17 13V9h-4M11 14l-4 4M7 14v4h4" strokeWidth={1.6} /></Draw></IconButton>
      <FloatDivider />
      <IconButton aria-label="Show toolbar"><Draw color={light}><path d="M12 13V3M8 7l4-4 4 4M3 15.500h18v5.500H3z" /><path d="M6 18.200h12" strokeDasharray="2 1" /></Draw></IconButton>
    </FloatBar>
  </DocView>
);

/* ---------- comments list ---------- */

const Comments = styled.aside`
  width: 204px;
  flex: none;
  padding-left: 5px;
`;
const SearchBox = styled.input`
  display: block;
  width: 173px;
  height: 31px;
  margin: 14px 0 0 13px;
  padding: 0 12px;
  border: 1px solid #c4c4c4;
  border-radius: 0;
  font-size: 12px;
  &::placeholder { color: #777; opacity: 1; }
`;
const FilterRow = styled.div`
  display: flex;
  align-items: center;
  gap: 12px;
  height: 39px;
  padding-left: 16px;
`;
const CommentCount = styled.span`
  margin-left: -6px;
  font-size: 10px;
  color: #a6a6a6;
`;
const CommentList = styled.ul`
  border-top: 2px solid #dcdcdc;
`;
const CommentItem = styled.li<{ $active?: boolean }>`
  padding: 2px 13px 5px 9px;
  border-bottom: 1px solid #d0d0d0;
  ${(p) => p.$active && css`background: #f9f2d8;`}
`;
const CommentHead = styled.div<{ $active?: boolean }>`
  display: flex;
  align-items: center;
  gap: 5px;
  height: 24px;
  ${(p) => p.$active && css`margin-bottom: 3px;`}
`;
const CommentAuthor = styled.span`
  flex: 1;
  font-size: 13px;
  color: #555;
`;
const CommentText = styled.p`
  font-size: 11px;
  line-height: 23px;
  color: #222;
`;
const CommentMeta = styled.p`
  font-size: 10px;
  line-height: 24px;
  color: #a0a0a0;
`;
const Tick = styled.input`
  appearance: none;
  width: 11px;
  height: 11px;
  margin: 0;
  border: 1px solid #777;
`;
const Small = styled.span`
  width: 18px;
  svg { width: 18px; height: 18px; }
`;

const comments = [
  { icon: <Strike bold color="#b5304c" />, page: 7, time: "2:40 PM" },
  { icon: <Strike bold color="#b5304c" />, page: 7, time: "2:41 PM" },
  { icon: <Replace bold color="#4a3fb0" />, text: "exterior", page: 7, time: "2:41 PM" },
  { icon: <Insert bold color="#4a3fb0" />, text: "crew", page: 7, time: "2:41 PM" },
  { icon: <Marker color="#b4c04a" fill="#e6ec80" />, text: "Be more specific", page: 12, time: "2:42 PM" },
  { icon: <Bubble color="#b0ba48" fill="#dfe56c" />, page: 13, time: "2:42 PM", active: true },
];

const CommentPane = () => (
  <Comments>
    <SearchBox type="search" aria-label="Search comments" placeholder="Search Comments..." />
    <FilterRow>
      <IconButton aria-label="Sort comments"><SortAZ /><Caret /></IconButton>
      <IconButton aria-label="Filter comments"><Funnel /><Caret /></IconButton>
      <IconButton aria-label="Comment options"><ListBox /><Caret /></IconButton>
      <CommentCount>6 Comments</CommentCount>
    </FilterRow>
    <CommentList>
      {comments.map((c, i) => (
        <CommentItem key={i} $active={c.active}>
          <CommentHead $active={c.active}>
            <Small>{c.icon}</Small>
            <CommentAuthor>Matt</CommentAuthor>
            {c.active && <Tick type="checkbox" aria-label="Mark comment" />}
          </CommentHead>
          {c.text && <CommentText>{c.text}</CommentText>}
          <CommentMeta>Page {c.page} &nbsp; 7/12/2016&nbsp; {c.time}</CommentMeta>
        </CommentItem>
      ))}
    </CommentList>
  </Comments>
);

export default function App() {
  return (
    <>
      <Global />
      <Desktop>
        <Backdrop />
        <Window>
          <TitleBar>
            <Svg $w={16} $h={16} viewBox="0 0 16 16" aria-hidden="true">
              <path d="M3 1h9l3 3v11H3z" fill="#f6eeee" stroke="#c8a0a0" />
              <path d="M1 1h9v5H1z" fill="#c01820" />
              <path d="M6 13c2-2 3-4 3-7 0 3 2 5 5 5-3-.5-6 .5-8 2z" fill="none" stroke="#c83038" />
            </Svg>
            <WindowTitle>General-Description.pdf - Adobe Acrobat Pro DC</WindowTitle>
            <WindowButtons>
              <WindowButton aria-label="Minimize"><Draw w={10} h={10} color="#2c2410"><path d="M1 8h7" /></Draw></WindowButton>
              <WindowButton aria-label="Maximize"><Draw w={10} h={10} color="#4a3c18" sw={1}><path d="M.5 1.500h8v7h-8zM.5 2.500h8" /></Draw></WindowButton>
              <WindowButton $close aria-label="Close"><Cross size={8} color="#fff" /></WindowButton>
            </WindowButtons>
          </TitleBar>
          <Client>
            <MenuBar>
              {["File", "Edit", "View", "Window", "Help"].map((m) => <MenuItem key={m}>{m}</MenuItem>)}
              <MenuClose aria-label="Close document"><Cross size={7} color="#555" /></MenuClose>
            </MenuBar>
            <Toolbars />
            <Workspace>
              <Rail>
                <IconButton aria-label="Page thumbnails"><Pages /></IconButton>
                <IconButton aria-label="Bookmarks"><BookmarkMark /></IconButton>
                <IconButton aria-label="Attachments"><Clip /></IconButton>
                <RailArrow><Svg $w={7} $h={14} viewBox="0 0 7 14"><path d="M7 0v14L0 7z" fill="#f0f0f0" /><path d="M7 0L0 7l7 7" fill="none" stroke="#ccc" /></Svg></RailArrow>
              </Rail>
              <Bookmarks />
              <Splitter $tone="#adadad" aria-label="Hide navigation pane"><Svg $w={6} $h={8} viewBox="0 0 6 8"><path d="M6 0v8L0 4z" fill="#666" /></Svg></Splitter>
              <DocumentView />
              <Splitter $tone="#eaeaea" aria-label="Hide comments pane"><Svg $w={6} $h={8} viewBox="0 0 6 8"><path d="M0 0v8l6-4z" fill="#666" /></Svg></Splitter>
              <CommentPane />
            </Workspace>
          </Client>
        </Window>
      </Desktop>
    </>
  );
}
